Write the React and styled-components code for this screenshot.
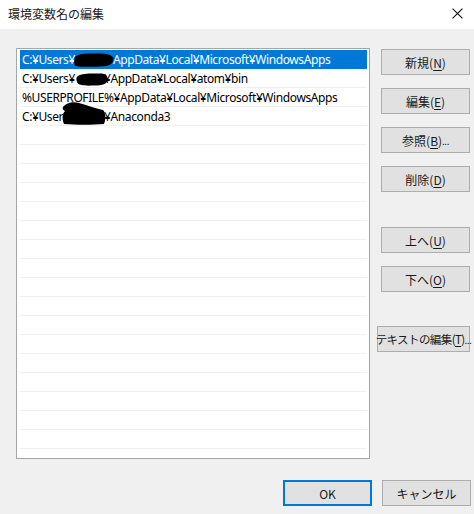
import React from 'react'
import styled, { createGlobalStyle } from 'styled-components'

const paths = [
  { id: 1, parts: ['C:¥Users¥', 'blob1', 'AppData¥Local¥Microsoft¥WindowsApps'], selected: true },
  { id: 2, parts: ['C:¥Users¥', 'blob2', '¥AppData¥Local¥atom¥bin'] },
  { id: 3, parts: ['%USERPROFILE%¥AppData¥Local¥Microsoft¥WindowsApps'] },
  { id: 4, parts: ['C:¥User', 'blob4', '¥Anaconda3'] },
]

const sideButtons = [
  { label: '新規', key: 'N', top: 1 },
  { label: '編集', key: 'E', top: 13 },
  { label: '参照', key: 'B', top: 13, dots: true },
  { label: '削除', key: 'D', top: 13 },
  { label: '上へ', key: 'U', top: 35 },
  { label: '下へ', key: 'O', top: 13 },
  { label: 'テキストの編集', key: 'T', top: 34, dots: true, wide: true },
]

function Blob({ kind }) {
  if (kind === 'blob1') {
    return (
      <BlobSvg width="40" height="14" viewBox="0 0 40 14" $ml={-1} $mr={-1}>
        <path d="M1 4 C3 1 12 0 20 0.5 C30 0 38 1 39.5 5 C40 10 36 13.5 26 13.5 C16 14 6 14 1 13 C0 10 0 7 1 4Z" />
      </BlobSvg>
    )
  }
  if (kind === 'blob2') {
    return (
      <BlobSvg width="32" height="13" viewBox="0 0 32 13" $ml={1} $mr={-4}>
        <path d="M2 3 C6 0 16 0.5 24 0.5 C30 0.5 32 3 31.5 7 C31 11 27 12.5 18 12.5 C9 13 2 12.5 1 9 C0 6 0 4 2 3Z" />
      </BlobSvg>
    )
  }
  return (
    <BlobSvg width="44" height="24" viewBox="0 0 44 24" $ml={-1} $mr={-2} $tall>
      <path d="M1 6 C4 2 11 0 17 2 C25 4 33 7.5 41 9 C44 12 44 19 42 23 C30 24 14 24 2 23 C0 18 0 13 3 10 C1 9 0 7.5 1 6Z" />
    </BlobSvg>
  )
}

export default function App() {
  const rows = Array.from({ length: 22 }, (_, i) => paths[i] || { id: 100 + i, parts: [] })
  return (
    <>
      <GlobalStyle />
      <Dialog>
        <TitleBar>
          <Title>環境変数名の編集</Title>
          <CloseIcon viewBox="0 0 10 10" width="11" height="11">
            <path d="M0.5 0.5 L9.5 9.5 M9.5 0.5 L0.5 9.5" />
          </CloseIcon>
        </TitleBar>
        <Body>
          <ListBox>
            {rows.map((row) => (
              <Row key={row.id} $selected={row.selected}>
                {row.parts.map((p, i) =>
                  p.startsWith('blob') ? <Blob key={i} kind={p} /> : <span key={i}>{p}</span>
                )}
              </Row>
            ))}
          </ListBox>
          <ButtonColumn>
            {sideButtons.map((b) => (
              <Button key={b.key} $top={b.top} $wide={b.wide}>
                {b.label}(<u>{b.key}</u>){b.dots ? <Dots>...</Dots> : null}
              </Button>
            ))}
          </ButtonColumn>
        </Body>
        <Footer>
          <Button $primary>OK</Button>
          <Button>キャンセル</Button>
        </Footer>
      </Dialog>
    </>
  )
}

const GlobalStyle = createGlobalStyle`
  html, body {
    margin: 0;
    padding: 0;
    background: #f0f0f0;
  }
  body {
    font-family: "Noto Sans", "Noto Sans CJK JP", sans-serif;
    font-size: 12px;
    color: #000;
  }
`
const Dialog = styled.div`
  width: 474px;
  height: 514px;
  display: flex;
  flex-direction: column;
  background: #f0f0f0;
  overflow: hidden;
`
const TitleBar = styled.div`
  height: 29px;
  background: #fff;
  display: flex;
  align-items: center;
  justify-content: space-between;
  padding: 0 11px 2px 8px;
  box-sizing: border-box;
`
const Title = styled.span`
  font-family: "Noto Sans CJK JP", sans-serif;
  font-size: 12px;
  color: #1a1a1a;
`
const CloseIcon = styled.svg`
  fill: none;
  stroke: #111;
  stroke-width: 1;
`
const Body = styled.div`
  display: flex;
  padding: 19px 4px 0 16px;
  gap: 7px;
`
const ListBox = styled.div`
  width: 354px;
  height: 411px;
  box-sizing: border-box;
  border: 1px solid #a6a6a6;
  background: #fff;
  padding: 1px 2px 0 3px;
  overflow: hidden;
`
const Row = styled.div`
  height: 19px;
  box-sizing: border-box;
  border-bottom: 1px solid ${(p) => (p.$selected ? '#0078d7' : '#f0f0f0')};
  background: ${(p) => (p.$selected ? '#0078d7' : 'transparent')};
  color: ${(p) => (p.$selected ? '#fff' : '#000')};
  padding-left: 2px;
  display: flex;
  align-items: center;
  white-space: nowrap;
  font-size: 12px;
  letter-spacing: -0.4px;
`
const BlobSvg = styled.svg`
  flex: none;
  fill: #000;
  overflow: visible;
  margin-left: ${(p) => p.$ml}px;
  margin-right: ${(p) => p.$mr}px;
  margin-top: ${(p) => (p.$tall ? '-6px' : '2px')};
  position: relative;
  z-index: 1;
`
const ButtonColumn = styled.div`
  width: 93px;
  display: flex;
  flex-direction: column;
  align-items: flex-end;
`
const Button = styled.div`
  width: ${(p) => (p.$wide ? '93px' : '89px')};
  height: 26px;
  margin-top: ${(p) => p.$top || 0}px;
  box-sizing: border-box;
  background: #e1e1e1;
  border: 1px solid ${(p) => (p.$primary ? '#0078d7' : '#adadad')};
  box-shadow: ${(p) => (p.$primary ? 'inset 0 0 0 1px #0078d7' : 'none')};
  display: flex;
  align-items: center;
  justify-content: center;
  font-family: "Noto Sans CJK JP", sans-serif;
  font-size: ${(p) => (p.$wide ? '11.5px' : '12px')};
  color: #1a1a1a;
  white-space: nowrap;
  letter-spacing: ${(p) => (p.$wide ? '-0.6px' : '0')};
  u {
    text-underline-offset: 2px;
  }
`
const Dots = styled.span`
  font-size: 10px;
  letter-spacing: -0.5px;
`
const Footer = styled.div`
  display: flex;
  justify-content: flex-end;
  gap: 10px;
  padding: 21px 3px 0 0;
`
